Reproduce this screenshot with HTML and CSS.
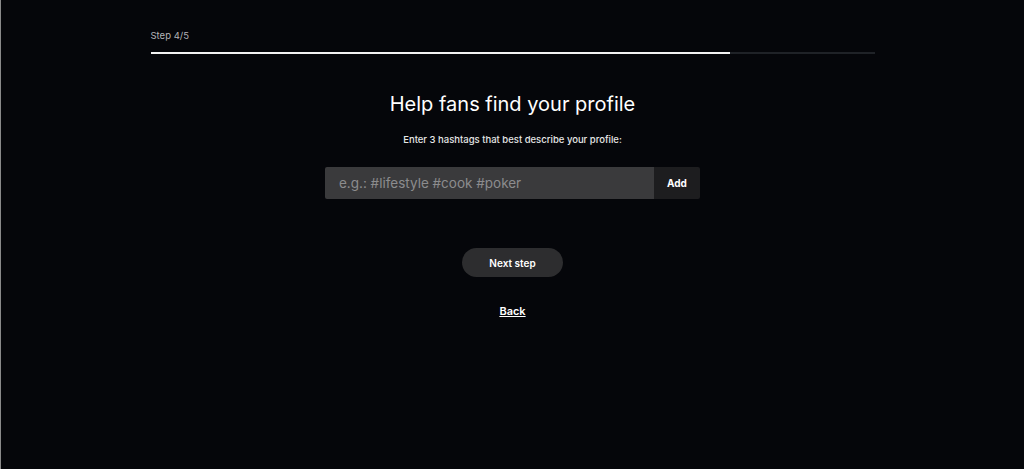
FILE: index.html
```html
<!DOCTYPE html>
<html lang="en">
<head>
<meta charset="utf-8">
<title>Step 4/5</title>
<link rel="stylesheet" href="styles.css">
</head>
<body>
<div class="page">
  <div class="wizard">
    <div class="step-label">Step 4/5</div>
    <div class="progress"><div class="progress-fill" style="width:80%"></div></div>
    <h1 class="title">Help fans find your profile</h1>
    <p class="subtitle">Enter 3 hashtags that best describe your profile:</p>
    <div class="tag-input">
      <input class="tag-field" type="text" placeholder="e.g.: #lifestyle #cook #poker">
      <button class="tag-add" type="button">Add</button>
    </div>
    <button class="next-btn" type="button">Next step</button>
    <a class="back-link" href="#">Back</a>
  </div>
</div>
</body>
</html>
```
FILE: styles.css
```css
html, body {
  margin: 0;
  padding: 0;
  height: 100%;
  background: #05060a;
}
body {
  border-left: 1px solid #8a8a8a;
  box-sizing: border-box;
  font-family: Inter, "Liberation Sans", sans-serif;
  color: #fff;
}
.page {
  display: flex;
  justify-content: center;
}
.wizard {
  width: 724px;
  display: flex;
  flex-direction: column;
  align-items: center;
  padding-top: 30px;
}
.step-label {
  align-self: flex-start;
  font-size: 9.5px;
  color: #b4b4b8;
  line-height: 12px;
}
.progress {
  align-self: stretch;
  height: 2px;
  margin-top: 10px;
  background: #1f2227;
}
.progress-fill {
  height: 100%;
  background: #f2f2f2;
}
.title {
  margin: 38px 0 0;
  font-size: 20px;
  font-weight: 400;
  line-height: 24px;
  color: #fff;
}
.subtitle {
  margin: 18px 0 0;
  font-size: 9.5px;
  font-weight: 500;
  line-height: 12px;
  color: #e6e6e6;
}
.tag-input {
  display: flex;
  width: 375px;
  height: 32px;
  margin-top: 21px;
  border-radius: 2px;
  overflow: hidden;
}
.tag-field {
  flex: 1;
  min-width: 0;
  border: none;
  outline: none;
  background: #3a3a3c;
  padding: 0 14px;
  font-family: Inter, "Liberation Sans", sans-serif;
  font-size: 13.5px;
  color: #fff;
}
.tag-field::placeholder {
  color: #8c8c8e;
}
.tag-add {
  width: 46px;
  border: none;
  background: #1d1d1f;
  color: #fff;
  font-family: Inter, "Liberation Sans", sans-serif;
  font-size: 10px;
  font-weight: 700;
  padding: 0;
}
.next-btn {
  margin-top: 49px;
  width: 101px;
  height: 29px;
  border: none;
  border-radius: 15px;
  background: #2d2d2f;
  color: #fff;
  font-family: Inter, "Liberation Sans", sans-serif;
  font-size: 10px;
  font-weight: 600;
  padding: 0;
}
.back-link {
  margin-top: 27px;
  font-size: 11px;
  font-weight: 600;
  color: #fff;
  text-decoration: underline;
}
```
